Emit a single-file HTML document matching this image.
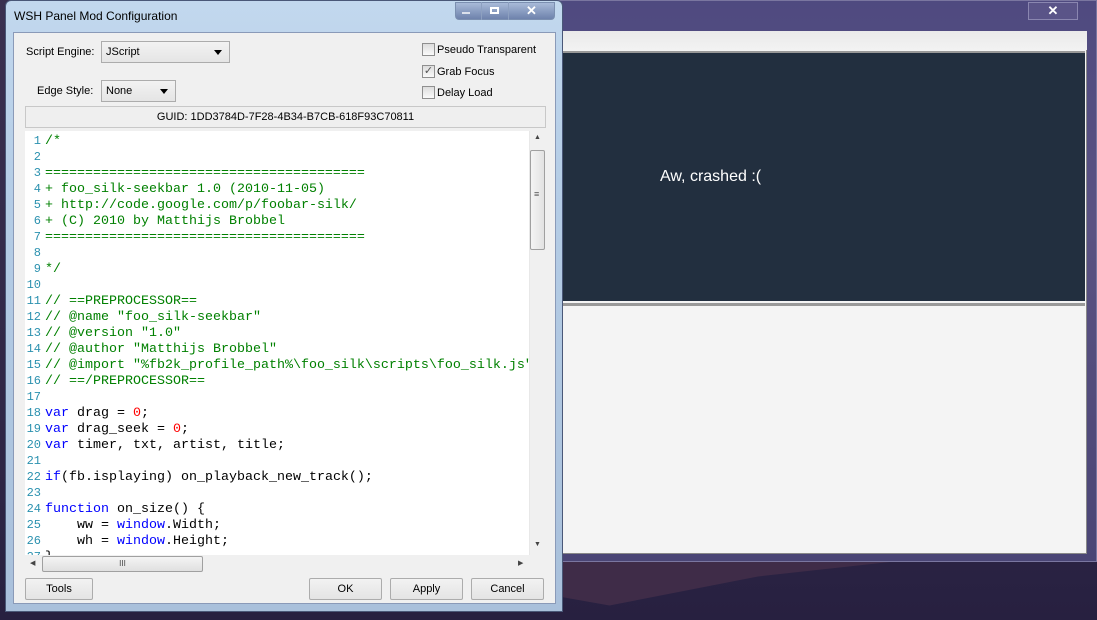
<!DOCTYPE html><html><head><meta charset="utf-8"><style>
*{margin:0;padding:0;box-sizing:border-box}
body{width:1097px;height:620px;overflow:hidden;position:relative;background:#2a2343;font-family:"Liberation Sans",sans-serif;font-size:11px;color:#000}
.abs{position:absolute}
.code{font-family:"Liberation Mono",monospace;font-size:13.33px;line-height:16px;white-space:pre}
.ln{color:#2b91af;display:inline-block;width:16px;height:16px;text-align:right;font-size:12px;line-height:15px;vertical-align:top;margin-right:4px}
.c{color:#008000}.k{color:#0000ff}.n{color:#ff0000}
.btn{position:absolute;height:22px;border:1px solid #acacac;background:linear-gradient(#f2f2f2,#e4e4e4);text-align:center;line-height:20px;font-size:11px;border-radius:2px}
.cb{position:absolute;width:13px;height:13px;border:1px solid #8f8f8f;background:linear-gradient(#ddd,#fafafa)}
.sel{position:absolute;height:22px;border:1px solid #acacac;background:linear-gradient(#f2f2f2,#e5e5e5);padding-left:4px;line-height:20px}
.sel:after{content:"";position:absolute;right:7px;top:8px;border:4px solid transparent;border-top:5px solid #000}
</style></head><body>
<div class="abs" style="left:0;top:0;width:1097px;height:620px;background:linear-gradient(180deg,#3a3050 0%,#2d2545 80%,#272040 100%)"></div>
<div class="abs" style="left:560px;top:562px;width:330px;height:58px;background:#3f2c48;clip-path:polygon(0 0,100% 0,60% 25%,15% 75%,0 60%)"></div>
<div class="abs" style="left:556px;top:0;width:541px;height:562px;background:linear-gradient(180deg,#4f4a80,#5a5282 40%,#4a4575);border:1px solid #7a76a0"></div>
<div class="abs" style="left:1028px;top:2px;width:50px;height:18px;border:1px solid #8a86b0;background:#5a5488;color:#fff;text-align:center;font-size:13px;line-height:16px;font-weight:bold">✕</div>
<div class="abs" style="left:560px;top:31px;width:527px;height:523px;background:#f4f4f4;border:1px solid #888"></div>
<div class="abs" style="left:560px;top:31px;width:527px;height:19px;background:linear-gradient(#eaeaea,#f2f2f2)"></div>
<div class="abs" style="left:563px;top:51px;width:522px;height:250px;background:#222f3f;border-top:2px solid #999"></div>
<div class="abs" style="left:563px;top:303px;width:522px;height:3px;background:#999"></div>
<div class="abs" style="left:660px;top:168px;color:#fff;font-size:16px">Aw, crashed :(</div>
<div class="abs" style="left:5px;top:0;width:558px;height:612px;background:linear-gradient(180deg,#c2d8ee 0%,#b5cde6 30%,#a9c0db 100%);border:1px solid #4a5878;border-radius:6px 6px 0 0"></div>
<div class="abs" style="left:14px;top:9px;font-size:12px">WSH Panel Mod Configuration</div>
<div class="abs" style="left:455px;top:2px;width:100px;height:18px;border:1px solid #7b8fb0;background:linear-gradient(#a8bad8,#6e82ac);border-radius:0 0 4px 4px"></div>
<div class="abs" style="left:481px;top:2px;width:1px;height:18px;background:#8da0c0"></div>
<div class="abs" style="left:508px;top:2px;width:1px;height:18px;background:#8da0c0"></div>
<div class="abs" style="left:462px;top:12px;width:8px;height:2px;background:#fff;opacity:.7"></div>
<div class="abs" style="left:490px;top:7px;width:9px;height:7px;border:2px solid #fff"></div>
<div class="abs" style="left:508px;top:2px;width:47px;height:18px;color:#fff;text-align:center;font-weight:bold;font-size:13px;line-height:17px">✕</div>
<div class="abs" style="left:13px;top:32px;width:543px;height:572px;background:#f0f0f0;border:1px solid #8a9ab8"></div>
<div class="abs" style="left:26px;top:46px">Script Engine:</div>
<div class="sel" style="left:101px;top:41px;width:129px">JScript</div>
<div class="abs" style="left:37px;top:85px">Edge Style:</div>
<div class="sel" style="left:101px;top:80px;width:75px">None</div>
<div class="cb" style="left:422px;top:43px"></div><div class="abs" style="left:437px;top:44px">Pseudo Transparent</div>
<div class="cb" style="left:422px;top:65px;font-size:11px;line-height:10px;color:#555;text-align:center">✓</div><div class="abs" style="left:437px;top:66px">Grab Focus</div>
<div class="cb" style="left:422px;top:86px"></div><div class="abs" style="left:437px;top:87px">Delay Load</div>
<div class="abs" style="left:25px;top:106px;width:521px;height:22px;border:1px solid #c8c8c8;background:#efefef;text-align:center;line-height:20px;font-size:11px">GUID: 1DD3784D-7F28-4B34-B7CB-618F93C70811</div>
<div class="abs" style="left:25px;top:131px;width:521px;height:442px;background:#fff;overflow:hidden">
<div class="code" style="position:absolute;left:0;top:3px"><span class="ln">1</span><span class="c">/*</span>
<span class="ln">2</span>
<span class="ln">3</span><span class="c">========================================</span>
<span class="ln">4</span><span class="c">+ foo_silk-seekbar 1.0 (2010-11-05)</span>
<span class="ln">5</span><span class="c">+ http://code.google.com/p/foobar-silk/</span>
<span class="ln">6</span><span class="c">+ (C) 2010 by Matthijs Brobbel</span>
<span class="ln">7</span><span class="c">========================================</span>
<span class="ln">8</span>
<span class="ln">9</span><span class="c">*/</span>
<span class="ln">10</span>
<span class="ln">11</span><span class="c">// ==PREPROCESSOR==</span>
<span class="ln">12</span><span class="c">// @name "foo_silk-seekbar"</span>
<span class="ln">13</span><span class="c">// @version "1.0"</span>
<span class="ln">14</span><span class="c">// @author "Matthijs Brobbel"</span>
<span class="ln">15</span><span class="c">// @import "%fb2k_profile_path%\foo_silk\scripts\foo_silk.js"</span>
<span class="ln">16</span><span class="c">// ==/PREPROCESSOR==</span>
<span class="ln">17</span>
<span class="ln">18</span><span class="k">var</span> drag = <span class="n">0</span>;
<span class="ln">19</span><span class="k">var</span> drag_seek = <span class="n">0</span>;
<span class="ln">20</span><span class="k">var</span> timer, txt, artist, title;
<span class="ln">21</span>
<span class="ln">22</span><span class="k">if</span>(fb.isplaying) on_playback_new_track();
<span class="ln">23</span>
<span class="ln">24</span><span class="k">function</span> on_size() {
<span class="ln">25</span>    ww = <span class="k">window</span>.Width;
<span class="ln">26</span>    wh = <span class="k">window</span>.Height;
<span class="ln">27</span>}</div>
<div class="abs" style="left:504px;top:0;width:17px;height:424px;background:#f0f0f0;border-left:1px solid #e8e8e8"></div>
<div class="abs" style="left:505px;top:19px;width:15px;height:100px;background:linear-gradient(90deg,#f4f4f4,#e2e2e2);border:1px solid #a0a0a0;border-radius:2px"></div>
<div class="abs" style="left:509px;top:3px;font-size:7px;color:#444">▲</div>
<div class="abs" style="left:509px;top:410px;font-size:7px;color:#444">▼</div>
<div class="abs" style="left:509px;top:62px;font-size:9px;color:#555;line-height:3px">≡</div>
<div class="abs" style="left:0;top:424px;width:521px;height:18px;background:#f0f0f0"></div>
<div class="abs" style="left:17px;top:425px;width:161px;height:16px;background:linear-gradient(#f4f4f4,#e0e0e0);border:1px solid #a0a0a0;border-radius:2px;text-align:center;font-size:8px;line-height:14px;color:#444">III</div>
<div class="abs" style="left:5px;top:428px;font-size:7px;color:#444">◀</div>
<div class="abs" style="left:493px;top:428px;font-size:7px;color:#444">▶</div>
</div>
<div class="btn" style="left:25px;top:578px;width:68px">Tools</div>
<div class="btn" style="left:309px;top:578px;width:73px">OK</div>
<div class="btn" style="left:390px;top:578px;width:73px">Apply</div>
<div class="btn" style="left:471px;top:578px;width:73px">Cancel</div>
</body></html>
